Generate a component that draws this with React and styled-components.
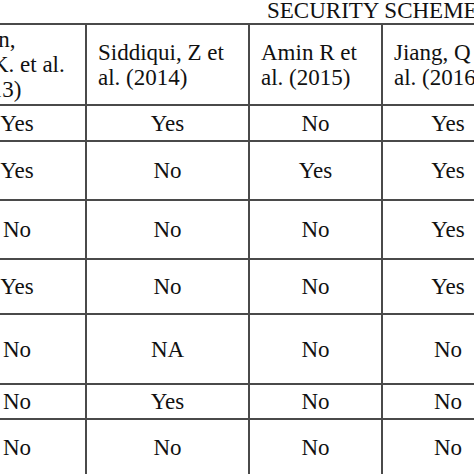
import React from 'react';
import styled, { createGlobalStyle } from 'styled-components';

const GlobalStyle = createGlobalStyle`
  body {
    margin: 0;
    background: #fff;
  }
`;

const Page = styled.div`
  width: 474px;
  height: 474px;
  overflow: hidden;
  background: #fff;
  color: #111;
  font-family: 'Liberation Serif', 'Times New Roman', serif;
  font-size: 23px;
`;

const Caption = styled.div`
  height: 23px;
  line-height: 21px;
  padding-left: 267px;
  white-space: nowrap;
  letter-spacing: 0;
`;

const Table = styled.div`
  display: grid;
  grid-template-columns: 136px 161px 131px 130px;
  grid-template-rows: 79px 34px 57px 57px 53px 68px 33px 55px;
  gap: 2px;
  padding: 2px;
  margin-left: -53px;
  width: max-content;
  background: #4a4a4a;
`;

const HeadCell = styled.div`
  display: flex;
  align-items: center;
  padding: 0 11px;
  background: #fff;
  line-height: 25px;
  text-align: left;
`;

const Cell = styled.div`
  display: flex;
  align-items: center;
  justify-content: center;
  background: #fff;
  line-height: 25px;
  white-space: nowrap;
`;

const headers = [
  <>Khan,<br />M. K. et al.<br />(2013)</>,
  'Siddiqui, Z et al. (2014)',
  'Amin R et al. (2015)',
  'Jiang, Q et al. (2016)',
];

const rows = [
  ['Yes', 'Yes', 'No', 'Yes'],
  ['Yes', 'No', 'Yes', 'Yes'],
  ['No', 'No', 'No', 'Yes'],
  ['Yes', 'No', 'No', 'Yes'],
  ['No', 'NA', 'No', 'No'],
  ['No', 'Yes', 'No', 'No'],
  ['No', 'No', 'No', 'No'],
];

const App = () => {
  return (
    <Page>
      <GlobalStyle />
      <Caption>SECURITY SCHEMES</Caption>
      <Table>
        {headers.map((h, i) => (
          <HeadCell key={`h${i}`}>
            <div>{h}</div>
          </HeadCell>
        ))}
        {rows.map((row, r) =>
          row.map((value, c) => <Cell key={`${r}-${c}`}>{value}</Cell>)
        )}
      </Table>
    </Page>
  );
};

export default App;
